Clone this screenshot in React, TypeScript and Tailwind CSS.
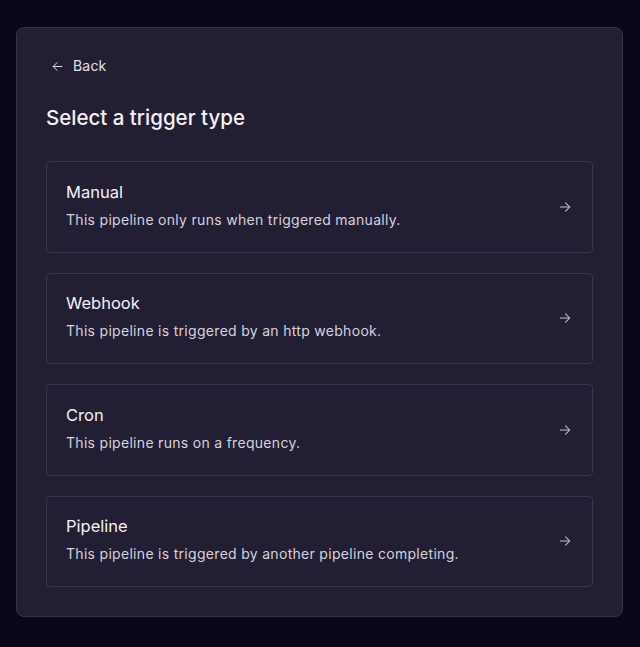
import React from "react";

const items = [
  { title: "Manual", desc: "This pipeline only runs when triggered manually." },
  { title: "Webhook", desc: "This pipeline is triggered by an http webhook." },
  { title: "Cron", desc: "This pipeline runs on a frequency." },
  { title: "Pipeline", desc: "This pipeline is triggered by another pipeline completing." },
];

function ArrowRight() {
  return (
    <svg width="14" height="14" viewBox="0 0 24 24" fill="none" stroke="currentColor" strokeWidth="1.8" strokeLinecap="round" strokeLinejoin="round">
      <path d="M4 12h16" />
      <path d="M13 5l7 7-7 7" />
    </svg>
  );
}

function ArrowLeft() {
  return (
    <svg width="13" height="13" viewBox="0 0 24 24" fill="none" stroke="currentColor" strokeWidth="1.8" strokeLinecap="round" strokeLinejoin="round">
      <path d="M20 12H4" />
      <path d="M11 5l-7 7 7 7" />
    </svg>
  );
}

export default function App() {
  return (
    <div className="min-h-[647px] w-full bg-[#0a0718] pt-[27px] pl-4" style={{ fontFamily: "Inter, 'Noto Sans', sans-serif" }}>
      <div className="w-[607px] rounded-lg border border-[#36324a] bg-[#221f33] pl-[29px] pr-[29px] pt-[28px] pb-[29px]">
        <button className="flex h-5 items-center gap-[9px] pl-[5px] text-[14px] leading-5 tracking-[0.2px] text-[#e4e1ec]">
          <ArrowLeft />
          <span>Back</span>
        </button>
        <h1 className="mt-[28px] text-[20.5px] leading-7 font-medium text-[#f4f2f8]">Select a trigger type</h1>
        <div className="mt-[29px] flex flex-col gap-5">
          {items.map((it) => (
            <div key={it.title} className="flex h-[91.5px] items-center justify-between rounded border border-[#3a3650] bg-[#221e33] pl-[19px] pr-[20px]">
              <div className="flex flex-col pb-1">
                <div className="text-[16.5px] leading-6 text-[#f4f2f8]">{it.title}</div>
                <div className="mt-1.5 text-[14px] leading-5 tracking-[0.3px] text-[#d6d3de]">{it.desc}</div>
              </div>
              <div className="text-[#c9c5d4]">
                <ArrowRight />
              </div>
            </div>
          ))}
        </div>
      </div>
    </div>
  );
}
